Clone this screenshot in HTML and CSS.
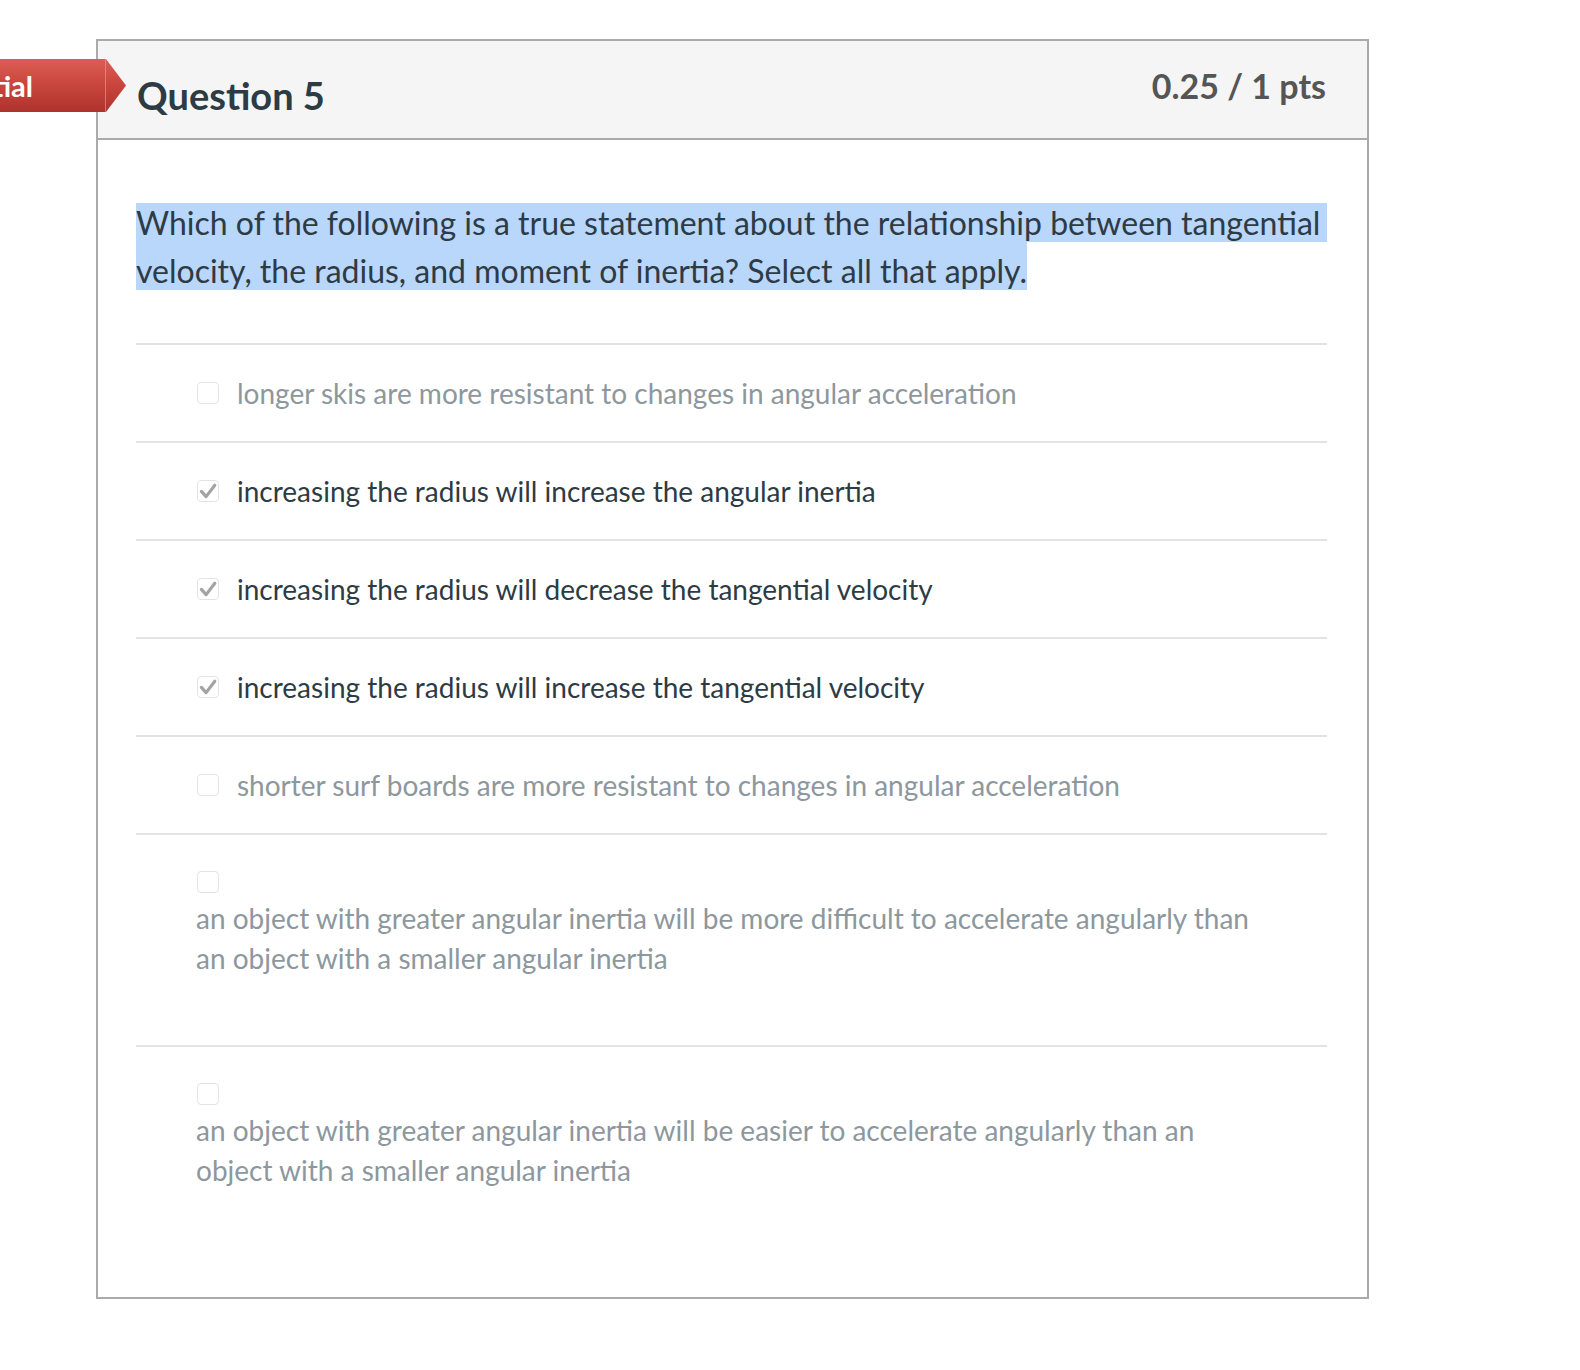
FILE: index.html
```html
<!DOCTYPE html>
<html lang="en">
<head>
<meta charset="utf-8">
<title>Question 5</title>
<link rel="stylesheet" href="styles.css">
</head>
<body>
<div class="page">
  <div class="banner"><span class="banner-text">Partial</span></div>
  <div class="question">
    <div class="q-header">
      <h2 class="q-title">Question 5</h2>
      <div class="q-points">0.25 / 1 pts</div>
    </div>
    <div class="q-body">
      <p class="q-text"><span class="hl hl-first">Which of the following is a true statement about the relationship between tangential</span> <span class="hl hl-next">velocity, the radius, and moment of inertia? Select all that apply.</span></p>
      <div class="answers">
        <div class="answer">
          <span class="box"></span>
          <span class="a-text muted">longer skis are more resistant to changes in angular acceleration</span>
        </div>
        <div class="answer">
          <span class="box"><svg viewBox="0 0 22 22" width="22" height="22"><path d="M4.4 11.4 L9.1 16.6 L17.8 5.2" fill="none" stroke="#a3a3a3" stroke-width="3.2" stroke-linecap="round" stroke-linejoin="round"/></svg></span>
          <span class="a-text">increasing the radius will increase the angular inertia</span>
        </div>
        <div class="answer">
          <span class="box"><svg viewBox="0 0 22 22" width="22" height="22"><path d="M4.4 11.4 L9.1 16.6 L17.8 5.2" fill="none" stroke="#a3a3a3" stroke-width="3.2" stroke-linecap="round" stroke-linejoin="round"/></svg></span>
          <span class="a-text">increasing the radius will decrease the tangential velocity</span>
        </div>
        <div class="answer">
          <span class="box"><svg viewBox="0 0 22 22" width="22" height="22"><path d="M4.4 11.4 L9.1 16.6 L17.8 5.2" fill="none" stroke="#a3a3a3" stroke-width="3.2" stroke-linecap="round" stroke-linejoin="round"/></svg></span>
          <span class="a-text">increasing the radius will increase the tangential velocity</span>
        </div>
        <div class="answer">
          <span class="box"></span>
          <span class="a-text muted">shorter surf boards are more resistant to changes in angular acceleration</span>
        </div>
        <div class="answer answer-long">
          <div class="box-line"><span class="box"></span></div>
          <div class="a-long muted">an object with greater angular inertia will be more difficult to accelerate angularly than an object with a smaller angular inertia</div>
        </div>
        <div class="answer answer-long">
          <div class="box-line"><span class="box"></span></div>
          <div class="a-long muted">an object with greater angular inertia will be easier to accelerate angularly than an object with a smaller angular inertia</div>
        </div>
      </div>
    </div>
  </div>
</div>
</body>
</html>
```

FILE: styles.css
```css
* { box-sizing: border-box; }

html, body {
  margin: 0;
  padding: 0;
  background: #ffffff;
}

body {
  font-family: Lato, "Open Sans", "Liberation Sans", sans-serif;
  color: #2d3b45;
}

.page {
  position: relative;
  padding-top: 39px;
  padding-bottom: 70px;
}

.banner {
  position: absolute;
  left: 0;
  top: 59px;
  width: 126px;
  height: 53px;
  background: linear-gradient(to bottom, #dd5d54 0%, #c8453d 50%, #ad332c 100%);
  clip-path: polygon(0 0, 106px 0, 126px 50%, 106px 100%, 0 100%);
  z-index: 2;
  overflow: hidden;
}

.banner::after {
  content: "";
  position: absolute;
  left: 105px;
  top: 0;
  bottom: 0;
  width: 1px;
  background: rgba(255, 160, 150, 0.55);
}

.banner-text {
  position: absolute;
  right: 93px;
  top: 0;
  line-height: 53px;
  font-size: 29px;
  font-weight: 700;
  color: #ffffff;
  white-space: nowrap;
}

.question {
  margin-left: 96px;
  width: 1273px;
  border: 2px solid #aaaaaa;
  background: #ffffff;
}

.q-header {
  display: flex;
  justify-content: space-between;
  align-items: flex-start;
  height: 99px;
  padding: 0 41px 0 39px;
  background: #f5f5f5;
  border-bottom: 2px solid #aaaaaa;
}

.q-title {
  margin: 31px 0 0 0;
  font-size: 38px;
  line-height: 46px;
  font-weight: 700;
  color: #2d3b45;
}

.q-points {
  margin-top: 24px;
  font-size: 34px;
  line-height: 41px;
  font-weight: 700;
  color: #555555;
}

.q-body {
  padding: 59px 40px 40px 38px;
}

.q-text {
  margin: 0 -16px 48px 0;
  font-size: 32px;
  line-height: 48px;
  color: #2d3b45;
}

.hl {
  background: #b9d6fb;
}

.hl-first {
  padding-right: 7px;
}

.hl-next {
  padding-top: 10px;
}

.answers {
  display: flex;
  flex-direction: column;
}

.answer {
  display: flex;
  align-items: center;
  gap: 18px;
  padding: 28px 0 28px 61px;
  border-top: 2px solid #e3e3e3;
  font-size: 28px;
  line-height: 40px;
}

.box {
  display: inline-block;
  flex: none;
  width: 22px;
  height: 22px;
  border: 1px solid #e4e4e4;
  border-radius: 4px;
  background: #ffffff;
  position: relative;
}

.box svg {
  position: absolute;
  left: -1px;
  top: -1px;
}

.a-text {
  color: #2d3b45;
}

.muted {
  color: #8d979e;
}

.answer-long {
  flex-direction: column;
  align-items: stretch;
  gap: 0;
  padding: 28px 60px 67px 60px;
}

.box-line {
  height: 35px;
  display: flex;
  align-items: center;
  padding-left: 1px;
  padding-top: 2px;
}

.a-long {
  font-size: 28px;
  line-height: 40px;
}
```
